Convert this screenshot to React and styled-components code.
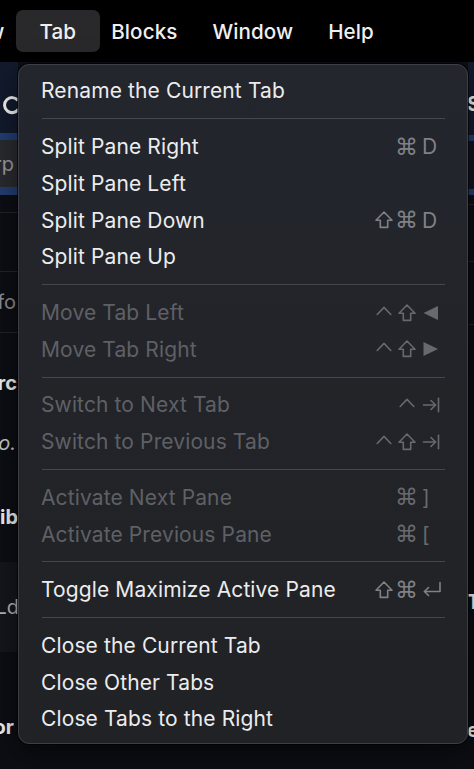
import React from 'react';
import styled, { createGlobalStyle, css } from 'styled-components';

const GlobalStyle = createGlobalStyle`
  html, body { margin: 0; padding: 0; background: #0c0e14; }
  body { width: 474px; height: 769px; overflow: hidden; }
  * { box-sizing: border-box; }
`;

const Screen = styled.div`
  position: relative;
  width: 474px;
  height: 769px;
  display: flex;
  flex-direction: column;
  overflow: hidden;
  font-family: Inter, "Noto Sans", "DejaVu Sans", sans-serif;
  background: #0c0e14;
`;

/* ---------- menu bar ---------- */
const MenuBar = styled.div`
  height: 62px;
  flex: none;
  background: #000;
  display: flex;
  align-items: center;
`;

const BarItem = styled.div`
  position: relative;
  padding: 0 17.5px;
  height: 42px;
  display: flex;
  align-items: center;
  font-size: 20.6px;
  font-weight: 500;
  color: #efeff1;
  letter-spacing: 0.1px;
  white-space: nowrap;
  ${(p) => p.$first && css`margin-left: -${p.$first}px;`}
  ${(p) =>
    p.$active &&
    css`
      &::before {
        content: '';
        position: absolute;
        top: 0;
        bottom: 0;
        left: -6px;
        right: -6px;
        border-radius: 7px;
        background: #29292b;
      }
    `}
`;

const BarLabel = styled.span`
  position: relative;
`;

/* ---------- backdrop (the app window behind the menu) ---------- */
const Backdrop = styled.div`
  flex: 1;
  display: flex;
`;

const Pane = styled.div`
  width: ${(p) => p.$w}px;
  flex: ${(p) => (p.$w ? 'none' : '1')};
  display: flex;
  flex-direction: column;
  overflow: hidden;
`;

const Section = styled.div`
  height: ${(p) => p.$h}px;
  flex: none;
  display: flex;
  align-items: center;
  justify-content: ${(p) => (p.$side === 'right' ? 'flex-start' : 'flex-end')};
  overflow: hidden;
  background: ${(p) => p.$bg || 'transparent'};
  border-bottom: ${(p) => (p.$line ? '1px solid #23252b' : 'none')};
  white-space: nowrap;
  font-size: 20px;
  font-family: Inter, "Noto Sans", sans-serif;
`;

const Frag = styled.span`
  flex: none;
  color: ${(p) => p.$color || '#f2f2f2'};
  font-weight: ${(p) => (p.$bold ? 700 : 400)};
  font-style: ${(p) => (p.$italic ? 'italic' : 'normal')};
  margin-right: ${(p) => p.$mr || 0}px;
  margin-left: ${(p) => p.$ml || 0}px;
  margin-top: ${(p) => p.$mt || 0}px;
`;

const LogoRing = styled.svg`
  flex: none;
  margin-right: -5px;
  margin-top: 14px;
`;

/* ---------- dropdown ---------- */
const Dropdown = styled.div`
  position: absolute;
  top: 64px;
  left: 18px;
  width: 450px;
  height: 680px;
  padding: 7.6px 0 5px;
  border-radius: 11px;
  border: 1px solid #3e3f44;
  background: linear-gradient(180deg, #23262d 0%, #222429 45%, #212225 100%);
  box-shadow: 0 0 0 1px rgba(0, 0, 0, 0.6), 0 10px 30px rgba(0, 0, 0, 0.5);
  display: flex;
  flex-direction: column;
`;

const Item = styled.div`
  height: 36.8px;
  flex: none;
  display: flex;
  align-items: center;
  padding: 0 27px 0 22px;
  font-size: 21px;
  letter-spacing: 0.12px;
  color: ${(p) => (p.$disabled ? '#5f6065' : '#ececee')};
`;

const Label = styled.span`
  flex: 1;
  white-space: nowrap;
`;

const Shortcut = styled.span`
  display: flex;
  align-items: center;
  color: ${(p) => (p.$disabled ? '#68696e' : '#808186')};
`;

const Mod = styled.span`
  width: 23px;
  height: 24px;
  display: flex;
  align-items: center;
  justify-content: center;
  font-family: "DejaVu Sans", sans-serif;
  font-size: 23px;
`;

const Key = styled.span`
  width: 18px;
  margin-left: 4px;
  height: 24px;
  display: flex;
  align-items: center;
  justify-content: flex-start;
  font-size: 21px;
  font-family: Inter, "Noto Sans", sans-serif;
`;

const Separator = styled.div`
  height: 18.8px;
  flex: none;
  display: flex;
  align-items: center;
  padding: 0 22px 0 23px;
  &::after {
    content: '';
    flex: 1;
    height: 1px;
    background: #45464b;
  }
`;

/* ---------- glyph icons ---------- */
const Ico = ({ children, w, h = 18 }) => (
  <svg width={w} height={h} viewBox={`0 0 ${w} ${h}`} fill="none" stroke="currentColor"
    strokeWidth="1.6" strokeLinecap="round" strokeLinejoin="round" style={{ flex: 'none' }}>
    {children}
  </svg>
);

const ShiftIcon = () => (
  <Ico w={18}>
    <path d="M9 1 L17 9.2 H12.7 V16.4 H5.3 V9.2 H1 Z" />
  </Ico>
);
const CtrlIcon = () => (
  <Ico w={16}>
    <path d="M1.2 10.5 L8 3.4 L14.8 10.5" />
  </Ico>
);
const LeftTri = () => (
  <Ico w={17}>
    <path d="M16 2 V16 L1.5 9 Z" fill="currentColor" stroke="none" />
  </Ico>
);
const RightTri = () => (
  <Ico w={17}>
    <path d="M1.5 2 V16 L16 9 Z" fill="currentColor" stroke="none" />
  </Ico>
);
const TabIcon = () => (
  <Ico w={18}>
    <path d="M1.5 9 H13.5" />
    <path d="M9 4.5 L13.5 9 L9 13.5" />
    <path d="M16.5 2.2 V15.8" />
  </Ico>
);
const ReturnIcon = () => (
  <Ico w={20}>
    <path d="M18 1.5 V10.5 H2.5" />
    <path d="M6.5 6.5 L2.5 10.5 L6.5 14.5" />
  </Ico>
);

const MODS = {
  cmd: <span>⌘</span>,
  shift: <ShiftIcon />,
  ctrl: <CtrlIcon />,
};

const KEYS = {
  left: <LeftTri />,
  right: <RightTri />,
  tab: <TabIcon />,
  ret: <ReturnIcon />,
};

const MENU = [
  { label: 'Rename the Current Tab' },
  'sep',
  { label: 'Split Pane Right', mods: ['cmd'], key: 'D' },
  { label: 'Split Pane Left' },
  { label: 'Split Pane Down', mods: ['shift', 'cmd'], key: 'D' },
  { label: 'Split Pane Up' },
  'sep',
  { label: 'Move Tab Left', disabled: true, mods: ['ctrl', 'shift'], key: 'left' },
  { label: 'Move Tab Right', disabled: true, mods: ['ctrl', 'shift'], key: 'right' },
  'sep',
  { label: 'Switch to Next Tab', disabled: true, mods: ['ctrl'], key: 'tab' },
  { label: 'Switch to Previous Tab', disabled: true, mods: ['ctrl', 'shift'], key: 'tab' },
  'sep',
  { label: 'Activate Next Pane', disabled: true, mods: ['cmd'], key: ']' },
  { label: 'Activate Previous Pane', disabled: true, mods: ['cmd'], key: '[' },
  'sep',
  { label: 'Toggle Maximize Active Pane', mods: ['shift', 'cmd'], key: 'ret' },
  'sep',
  { label: 'Close the Current Tab' },
  { label: 'Close Other Tabs' },
  { label: 'Close Tabs to the Right' },
];

const NAVY = '#121a2c';
const STRIPE = '#223e72';
const SEARCH = '#2a2b30';

export default function App() {
  return (
    <>
      <GlobalStyle />
      <Screen>
        <MenuBar>
          <BarItem $first={62}><BarLabel>View</BarLabel></BarItem>
          <BarItem $active><BarLabel>Tab</BarLabel></BarItem>
          <BarItem><BarLabel>Blocks</BarLabel></BarItem>
          <BarItem><BarLabel>Window</BarLabel></BarItem>
          <BarItem><BarLabel>Help</BarLabel></BarItem>
        </MenuBar>

        <Backdrop>
          <Pane $w={18}>
            <Section $h={71} $bg={NAVY}>
              <LogoRing width="22" height="22" viewBox="0 0 22 22">
                <path d="M17 6.5 A7.5 7.5 0 1 0 17.5 15" fill="none" stroke="#f4f4f4" strokeWidth="3" />
              </LogoRing>
            </Section>
            <Section $h={7} $bg={STRIPE} />
            <Section $h={47} $bg={SEARCH}>
              <Frag $color="#9a9b9f" $mr={4}>Interp</Frag>
            </Section>
            <Section $h={8} $bg={STRIPE} />
            <Section $h={18} $line />
            <Section $h={59} $line />
            <Section $h={61} $line>
              <Frag $color="#8d8e92" $mr={2}>Info</Frag>
            </Section>
            <Section $h={25} />
            <Section $h={50}>
              <Frag $bold $mr={1}>Sourc</Frag>
            </Section>
            <Section $h={70}>
              <Frag $italic $color="#c9cacd" $mr={2}>foo.</Frag>
            </Section>
            <Section $h={78}>
              <Frag $bold $mr={0}>Lib</Frag>
            </Section>
            <Section $h={6} />
            <Section $h={90} $bg="#14161c">
              <Frag $color="#b4b5b8" $mr={-1}>Ld</Frag>
            </Section>
            <Section $h={50} />
            <Section $h={50}>
              <Frag $bold $mr={4}>For</Frag>
            </Section>
          </Pane>
          <Pane />
          <Pane $w={6}>
            <Section $h={73} $bg={NAVY} $side="right">
              <Frag $bold $ml={-1} $mt={10}>S</Frag>
            </Section>
            <Section $h={6} $bg={STRIPE} $side="right" />
            <Section $h={48} $bg="#111520" $side="right" />
            <Section $h={6} $bg={STRIPE} $side="right" />
            <Section $h={10} $line $side="right" />
            <Section $h={57} $line $side="right" />
            <Section $h={63} $line $side="right" />
            <Section $h={252} $side="right" />
            <Section $h={50} $side="right">
              <Frag $bold $ml={-1}>T</Frag>
            </Section>
            <Section $h={78} $side="right" />
            <Section $h={50} $side="right">
              <Frag $bold $ml={-1}>e</Frag>
            </Section>
          </Pane>
        </Backdrop>

        <Dropdown>
          {MENU.map((m, i) =>
            m === 'sep' ? (
              <Separator key={i} />
            ) : (
              <Item key={i} $disabled={m.disabled}>
                <Label>{m.label}</Label>
                {m.key && (
                  <Shortcut $disabled={m.disabled}>
                    {m.mods.map((md, j) => (
                      <Mod key={j}>{MODS[md]}</Mod>
                    ))}
                    <Key>{KEYS[m.key] || m.key}</Key>
                  </Shortcut>
                )}
              </Item>
            )
          )}
        </Dropdown>
      </Screen>
    </>
  );
}
